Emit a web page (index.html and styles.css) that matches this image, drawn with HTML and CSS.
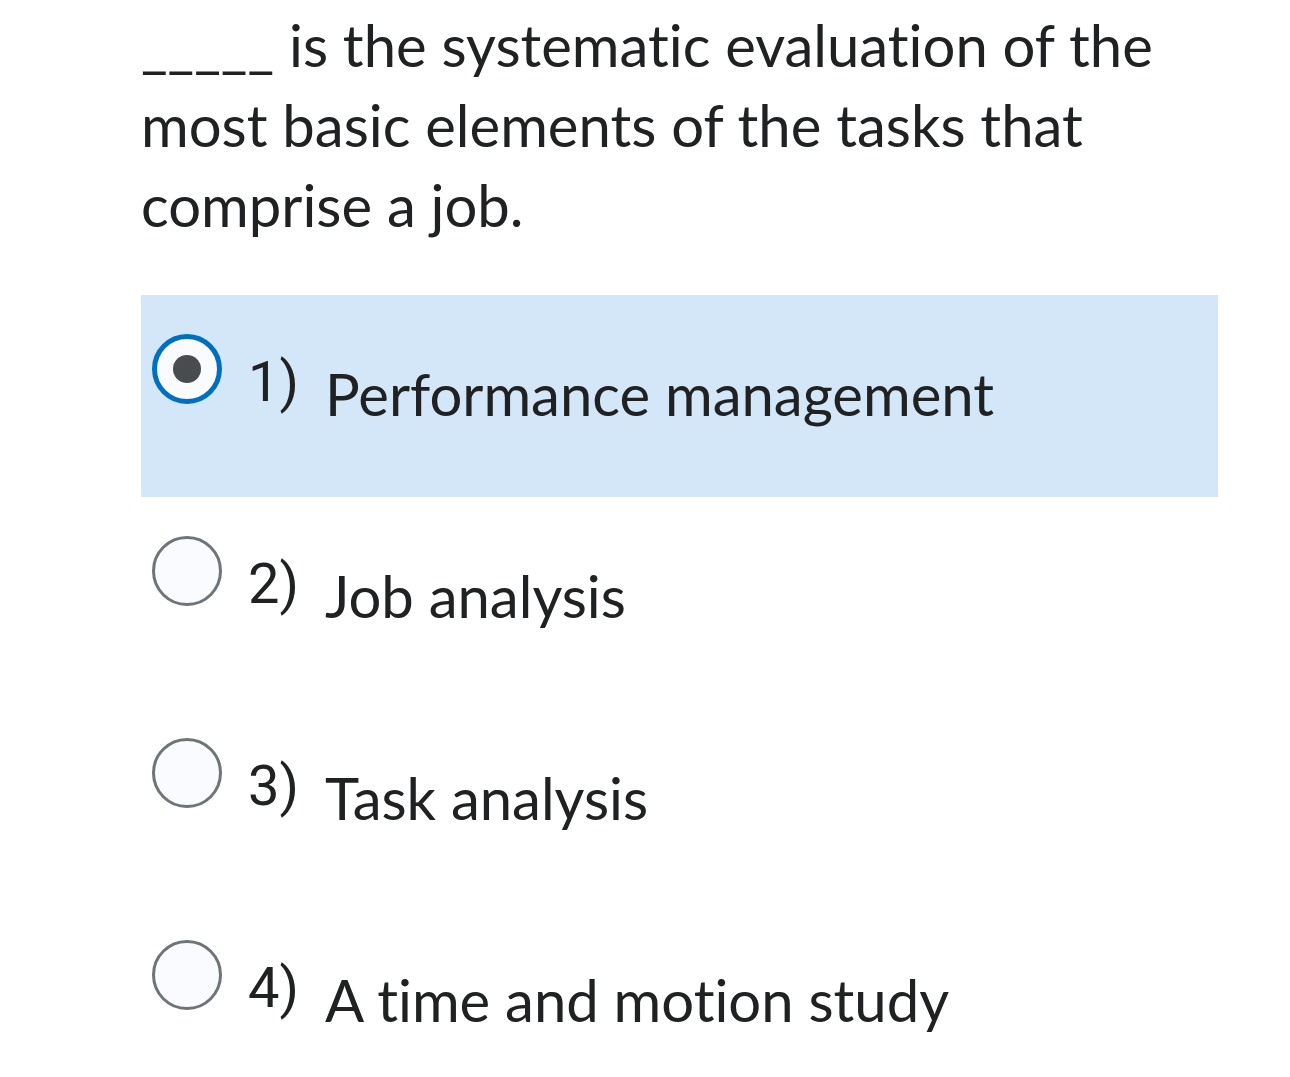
FILE: index.html
```html
<!DOCTYPE html>
<html lang="en">
<head>
    <meta charset="UTF-8">
    <meta name="viewport" content="width=device-width, initial-scale=1.0">
    <title>Question</title>
    <link rel="stylesheet" href="styles.css">
</head>
<body>
    <div class="quiz">
        <p class="question">_____ is the systematic evaluation of the most basic elements of the tasks that comprise a job.</p>

        <!-- answer options -->
        <div class="options">
            <label class="option selected">
                <span class="radio"><span class="dot"></span></span>
                <span class="num">1)</span>
                <span class="text">Performance management</span>
            </label>
            <label class="option">
                <span class="radio"></span>
                <span class="num">2)</span>
                <span class="text">Job analysis</span>
            </label>
            <label class="option">
                <span class="radio"></span>
                <span class="num">3)</span>
                <span class="text">Task analysis</span>
            </label>
            <label class="option">
                <span class="radio"></span>
                <span class="num">4)</span>
                <span class="text">A time and motion study</span>
            </label>
        </div>
    </div>
</body>
</html>
```

FILE: styles.css
```css
* {
    box-sizing: border-box;
    margin: 0;
    padding: 0;
}

body {
    background: #fff;
    color: #202122;
    font-family: Lato, "Noto Sans", sans-serif;
    font-variant-ligatures: none;
}

.quiz {
    width: 1077px;
    margin-left: 141px;
    padding-top: 5px;
}

/* question */
.question {
    font-size: 58px;
    line-height: 80px;
    margin-bottom: 50px;
}

/* options */
.option {
    display: flex;
    align-items: flex-start;
    height: 202px;
    cursor: pointer;
}

.option.selected {
    background: #d3e7f9;
}

.radio {
    flex: none;
    width: 70px;
    height: 70px;
    margin: 39px 0 0 11px;
    border: 3px solid #6e7477;
    border-radius: 50%;
    background: #f9fbff;
    display: flex;
    align-items: center;
    justify-content: center;
}

.option.selected .radio {
    border: 5px solid #006fbf;
}

.dot {
    width: 28px;
    height: 28px;
    border-radius: 50%;
    background: #494c4e;
}

.num {
    flex: none;
    width: 77px;
    margin: 59px 0 0 26px;
    font-family: Roboto, "Liberation Sans", sans-serif;
    font-size: 56px;
    line-height: 56px;
}

.text {
    margin-top: 70px;
    font-size: 58px;
    line-height: 58px;
}
```
